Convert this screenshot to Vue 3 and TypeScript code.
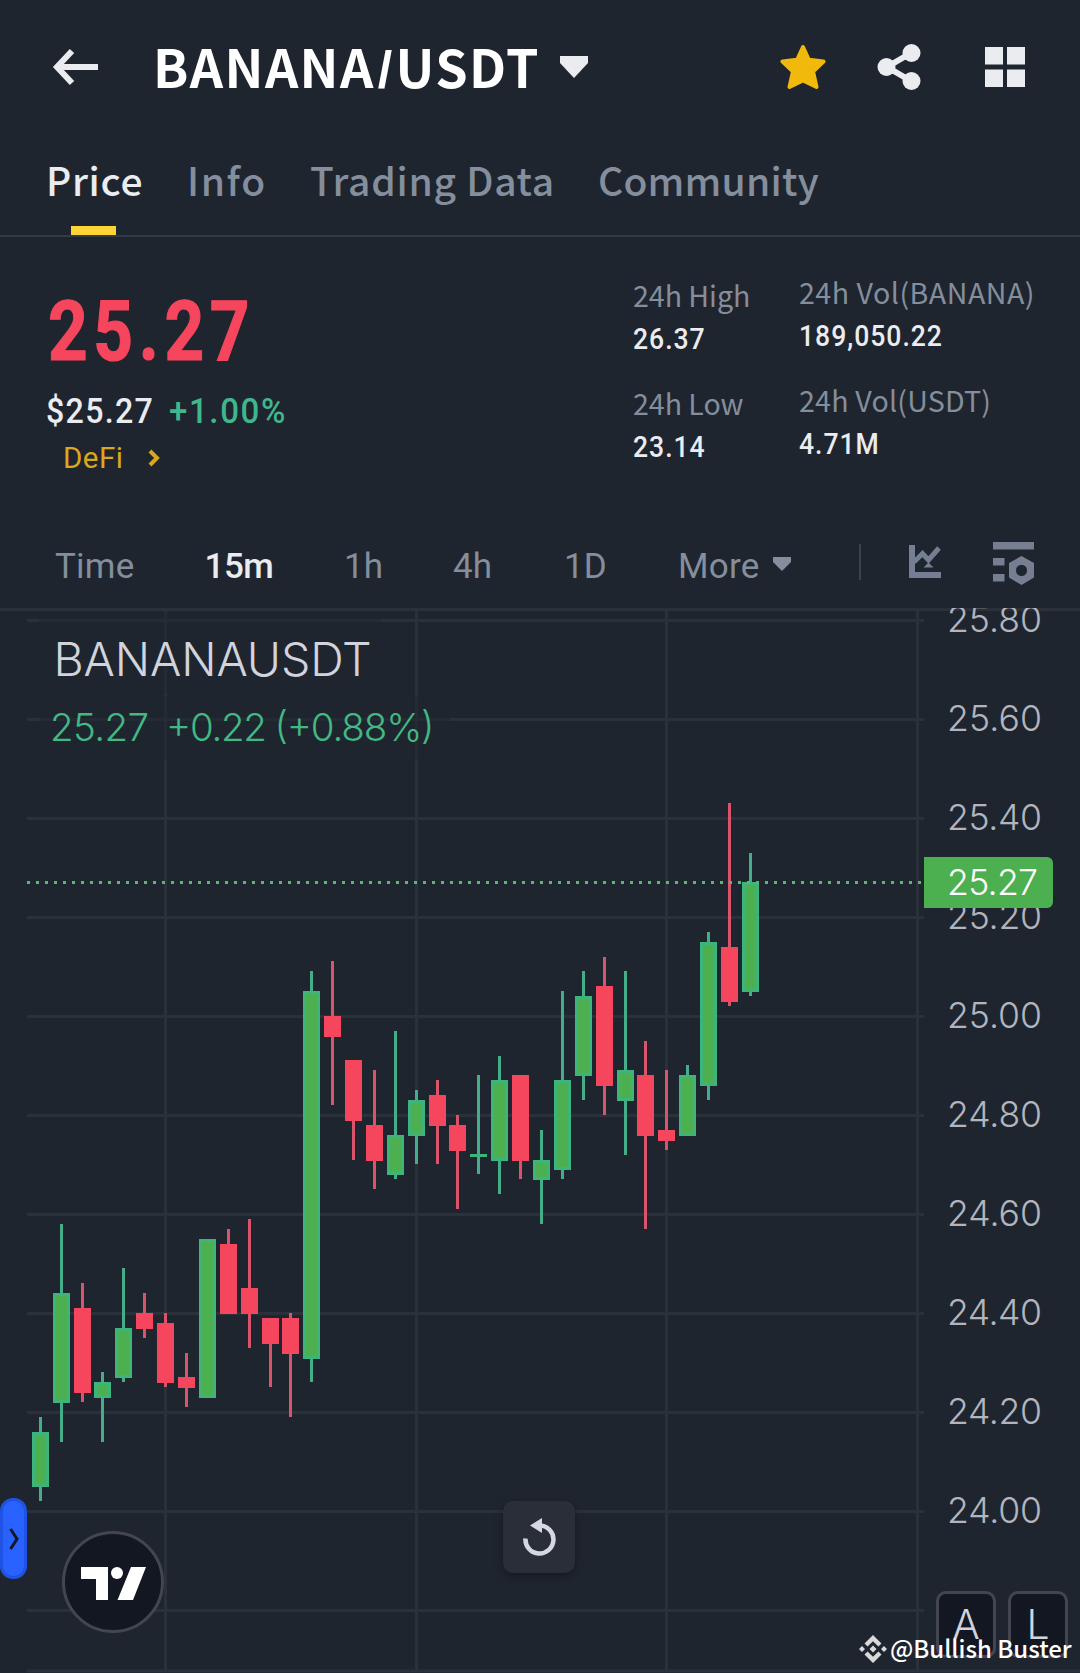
<script setup lang="ts">
interface Candle {
  x: number
  high: number
  top: number
  bottom: number
  low: number
  up: boolean
}

const tabs = ['Price', 'Info', 'Trading Data', 'Community']
const activeTab = 'Price'

const stats = [
  [
    { label: '24h High', value: '26.37' },
    { label: '24h Low', value: '23.14' },
  ],
  [
    { label: '24h Vol(BANANA)', value: '189,050.22' },
    { label: '24h Vol(USDT)', value: '4.71M' },
  ],
]

const intervals = ['Time', '15m', '1h', '4h', '1D']
const activeInterval = '15m'

// Chart coordinates: the plot's origin is CHART_TOP pixels down the screen.
const CHART_TOP = 608
const priceToY = (p: number): number => 1016.5 - (p - 25) * 495

const gridPrices = [25.8, 25.6, 25.4, 25.2, 25.0, 24.8, 24.6, 24.4, 24.2, 24.0, 23.8]
const axisPrices = gridPrices.slice(0, -1)
const gridColumns = [165.5, 416.5, 666.5, 917.5]
const lastPriceY = 882.5

const toCandle = (r: number[]): Candle => ({ x: r[0], high: r[1], top: r[2], bottom: r[3], low: r[4], up: r[5] === 1 })

// x centre, wick top, body top, body bottom, wick bottom, rising
const candles: Candle[] = [
  [40.5, 1417, 1432, 1487, 1501, 1],
  [61.5, 1224, 1293, 1403, 1442, 1],
  [82.5, 1283, 1308, 1393, 1402, 0],
  [102.5, 1372, 1382, 1398, 1442, 1],
  [123.5, 1268, 1328, 1378, 1382, 1],
  [144.5, 1293, 1313, 1329, 1338, 0],
  [165.5, 1313, 1323, 1383, 1387, 0],
  [186.5, 1353, 1377, 1388, 1407, 0],
  [207.5, 1239, 1239, 1398, 1398, 1],
  [228.5, 1229, 1244, 1314, 1314, 0],
  [249.5, 1219, 1288, 1314, 1348, 0],
  [270.5, 1318, 1318, 1344, 1387, 0],
  [290.5, 1313, 1318, 1354, 1417, 0],
  [311.5, 971, 991, 1359, 1382, 1],
  [332.5, 961, 1016, 1037, 1105, 0],
  [353.5, 1060, 1060, 1121, 1160, 0],
  [374.5, 1070, 1125, 1161, 1189, 0],
  [395.5, 1031, 1135, 1175, 1179, 1],
  [416.5, 1090, 1100, 1136, 1164, 1],
  [437.5, 1080, 1095, 1126, 1164, 0],
  [457.5, 1115, 1125, 1151, 1209, 0],
  [478.5, 1075, 1154, 1157, 1174, 1],
  [499.5, 1056, 1080, 1161, 1194, 1],
  [520.5, 1075, 1075, 1161, 1179, 0],
  [541.5, 1130, 1160, 1180, 1224, 1],
  [562.5, 991, 1080, 1170, 1179, 1],
  [583.5, 971, 996, 1076, 1100, 1],
  [604.5, 957, 986, 1086, 1115, 0],
  [625.5, 971, 1070, 1101, 1155, 1],
  [645.5, 1041, 1075, 1136, 1229, 0],
  [666.5, 1070, 1130, 1141, 1150, 0],
  [687.5, 1065, 1075, 1136, 1136, 1],
  [708.5, 932, 942, 1086, 1100, 1],
  [729.5, 803, 947, 1002, 1006, 0],
  [750.5, 853, 882, 992, 996, 1],
].map(toCandle)
</script>

<template>
  <main class="screen">
    <header class="header">
      <svg class="back" width="48" height="38" viewBox="0 0 48 38">
        <path d="M20 3 5 19l15 16M5 19h41" fill="none" stroke="#eaecef" stroke-width="6" />
      </svg>
      <h1>BANANA<span class="slash">/</span>USDT</h1>
      <svg class="caret" width="28" height="22" viewBox="0 0 28 22">
        <path d="M0 0h28v7L14 22 0 7z" fill="#eaecef" />
      </svg>
      <div class="actions">
        <svg width="46" height="46" viewBox="0 0 46 46">
          <path
            d="M23 3 28.8 15.8 43.5 17.5 33 27.5 36.5 43 23 36.5 9.500 43 13 27.500 2.500 17.500 17.200 15.800z"
            fill="#f0b90b"
            stroke="#f0b90b"
            stroke-width="4"
            stroke-linejoin="round"
          />
        </svg>
        <svg width="44" height="46" viewBox="0 0 44 46">
          <path d="M34 9 10 23l24 14" fill="none" stroke="#eaecef" stroke-width="6" />
          <g fill="#eaecef">
            <circle cx="34.500" cy="9" r="9" />
            <circle cx="9.500" cy="23" r="9" />
            <circle cx="34.500" cy="37" r="9" />
          </g>
        </svg>
        <svg width="40" height="40" viewBox="0 0 40 40" fill="#eaecef">
          <path d="M0 0h18v17.500H0zM22 0h18v17.500H22zM0 22.500h18V40H0zM22 22.500h18V40H22z" />
        </svg>
      </div>
    </header>

    <nav class="tabs">
      <a v-for="tab in tabs" :key="tab" :class="['tab', { active: tab === activeTab }]">
        <span>{{ tab }}</span>
      </a>
    </nav>

    <section class="quote">
      <div class="price-block">
        <div class="last">25.27</div>
        <div class="fiat"><span class="usd">$25.27</span><span class="change">+1.00%</span></div>
        <div class="tag">
          <span>DeFi</span>
          <svg width="12" height="18" viewBox="0 0 12 18">
            <path d="M2 2l7 7-7 7" fill="none" stroke="#d9a81c" stroke-width="4" />
          </svg>
        </div>
      </div>
      <div v-for="(column, i) in stats" :key="i" class="stat-column">
        <dl v-for="s in column" :key="s.label">
          <dt>{{ s.label }}</dt>
          <dd>{{ s.value }}</dd>
        </dl>
      </div>
    </section>

    <section class="intervals">
      <span v-for="item in intervals" :key="item" :class="['interval', { active: item === activeInterval }]">{{ item }}</span>
      <span class="interval more">
        More
        <svg width="18" height="14" viewBox="0 0 18 14"><path d="M0 0h18v5l-9 9-9-9z" fill="#848e9c" /></svg>
      </span>
      <i class="divider"></i>
      <svg class="indicator" width="32" height="33" viewBox="0 0 32 33">
        <path d="M0 0h6v27h26v6H0z" fill="#757f91" />
        <path d="M5 17l8.500-8.500 6 6.500L30 3" fill="none" stroke="#757f91" stroke-width="5" />
        <path d="M19.500 17.500l5 5h-10z" fill="#757f91" />
      </svg>
      <svg class="settings" width="41" height="43" viewBox="0 0 41 43" fill="#757f91">
        <path d="M0 0h41v7.500H0zM0 16h11.500v7.500H0zM0 32h11.500v7.500H0z" />
        <path fill-rule="evenodd" d="M28.500 14 41 21v14.500L28.500 43 16 35.500V21zM28.500 22.700a5.500 5.700 0 1 0 0 11.400 5.500 5.700 0 1 0 0-11.400z" />
      </svg>
    </section>

    <section class="chart">
      <svg class="plot" width="1080" height="1065" :viewBox="`0 ${CHART_TOP} 1080 1065`">
        <path d="M0 609.500H1080" class="grid" />
        <path v-for="p in gridPrices" :key="p" :d="`M27 ${priceToY(p)}H924`" class="grid" />
        <path v-for="x in gridColumns" :key="x" :d="`M${x} 609V1670`" class="grid" />
        <path d="M27 1671H1080" class="grid" />
        <rect x="39" y="612" width="342" height="82" class="legend-veil" />
        <rect x="39" y="696" width="411" height="64" class="legend-veil" />

        <g v-for="c in candles" :key="c.x" :class="c.up ? 'up' : 'down'">
          <rect class="wick" :x="c.x - 1.5" :y="c.high" width="3" :height="c.low - c.high" />
          <rect class="frame" :x="c.x - 8.5" :y="c.top" width="17" :height="c.bottom - c.top" />
          <rect
            v-if="c.bottom - c.top > 6"
            class="fill"
            :x="c.x - 5.5"
            :y="c.top + 3"
            width="11"
            :height="c.bottom - c.top - 6"
          />
        </g>
        <path :d="`M27 ${lastPriceY}H924`" class="last-line" />

        <g class="axis">
          <text v-for="p in axisPrices" :key="p" x="947" :y="priceToY(p) + 11.5" textLength="95">{{ p.toFixed(2) }}</text>
        </g>
        <path d="M924 857h123a6 6 0 0 1 6 6v39a6 6 0 0 1-6 6H924z" fill="#4caf50" />
        <text class="axis-last" x="947" y="895" textLength="91">25.27</text>

        <text class="symbol" x="53.500" y="676" textLength="318">BANANAUSDT</text>
        <g class="legend">
          <text x="50" y="741" textLength="99">25.27</text>
          <text x="166" y="741" textLength="101">+0.22</text>
          <text x="274.500" y="741" textLength="160">(+0.88%)</text>
        </g>
      </svg>

      <button class="drawer">
        <svg width="10" height="22" viewBox="0 0 10 22">
          <path d="M1.500 1 8 11 1.500 21" fill="none" stroke="#131722" stroke-width="3" />
        </svg>
      </button>

      <div class="tv">
        <svg width="66" height="33" viewBox="0 0 66 33" fill="#fff">
          <path d="M0 0h27v33H15V12H0zM50 0h15L52 33H36.500z" />
          <circle cx="36" cy="6" r="6" />
        </svg>
      </div>

      <button class="reset">
        <svg width="34" height="40" viewBox="0 0 34 40">
          <path d="M3.500 21.500A14 14 0 1 0 18 8.500" fill="none" stroke="#d5d8e0" stroke-width="4.500" />
          <path d="M8 8.500 20 1v15z" fill="#d5d8e0" />
        </svg>
      </button>

      <div class="scale-buttons"><button>A</button><button>L</button></div>

      <div class="watermark">
        <svg width="28" height="28" viewBox="0 0 28 28" fill="#d9d9d9">
          <path d="M14 0 22.500 8.500 19.400 11.600 14 6.200 8.600 11.600 5.500 8.500zM14 28 5.500 19.500 8.600 16.400 14 21.800 19.400 16.400 22.500 19.500zM3 11l3 3-3 3-3-3zM25 11l3 3-3 3-3-3zM14 10.500l3.500 3.500-3.500 3.500-3.500-3.500z" />
        </svg>
        <span>@Bullish Buster</span>
      </div>
    </section>
  </main>
</template>

<style>
body {
  background: #1f252f;
}
</style>

<style scoped>
.screen {
  width: 1080px;
  height: 1673px;
  overflow: hidden;
  background: #1f252f;
  color: #eaecef;
  font-family: 'Noto Sans CJK JP', 'Open Sans', sans-serif;
}
svg {
  display: block;
  flex: none;
}
button {
  padding: 0;
}

.header {
  display: flex;
  align-items: center;
  height: 134px;
  padding: 0 55px 0 52px;
  box-sizing: border-box;
}
h1 {
  width: 380px;
  margin: 0 27px 2px 53px;
  font-size: 52px;
  line-height: 76px;
  font-weight: 700;
  letter-spacing: 1.4px;
  color: #fff;
  white-space: nowrap;
}
.slash {
  padding: 0 2px 0 3px;
  font-family: 'Liberation Sans', sans-serif;
  line-height: 1;
}
.actions {
  display: flex;
  align-items: center;
  gap: 64.500px;
  margin-left: auto;
}
.actions svg:first-child {
  margin-right: -13.500px;
}

.tabs {
  display: grid;
  grid-template-columns: 141px 123px 288px auto;
  height: 101px;
  padding-left: 46px;
  border-bottom: 2px solid #333b47;
}
.tab {
  position: relative;
  font-size: 39px;
  line-height: 90px;
  font-weight: 500;
  letter-spacing: 0.7px;
  color: #848e9c;
  white-space: nowrap;
}
.tab:nth-child(2) {
  letter-spacing: 1.6px;
}
.tab:last-child {
  letter-spacing: 0.2px;
}
.tab.active {
  color: #eaecef;
}
.tab.active::after {
  content: '';
  position: absolute;
  left: 25px;
  bottom: 0;
  width: 45px;
  height: 9px;
  background: #fcd535;
}

.quote {
  display: flex;
  height: 278px;
  font-family: Roboto, sans-serif;
}
.price-block {
  width: 633px;
  padding-top: 45px;
  box-sizing: border-box;
}
.last {
  width: 260px;
  margin-left: 48px;
  font-size: 84px;
  line-height: 100px;
  font-weight: 700;
  letter-spacing: 6.8px;
  color: #f6465d;
  -webkit-text-stroke: 1.2px #f6465d;
  transform: scaleX(0.825);
  transform-origin: left;
}
.fiat {
  display: flex;
  height: 44px;
  margin-top: 8px;
  padding-left: 46px;
  font-size: 35px;
  line-height: 44px;
  font-weight: 500;
  letter-spacing: 1.4px;
}
.fiat span {
  width: 122px;
  transform: scaleX(0.92);
  transform-origin: left;
}
.fiat .change {
  letter-spacing: 1.7px;
  transform: translateX(1px) scaleX(0.945);
  color: #3fb68b;
}
.tag {
  display: flex;
  align-items: center;
  gap: 25px;
  margin-left: 63px;
  margin-top: -1px;
  font-size: 29.5px;
  line-height: 50px;
  letter-spacing: 0.5px;
  color: #d9a81c;
}
.tag svg {
  margin-top: -1px;
}
.stat-column {
  width: 166px;
  padding-top: 37px;
}
.stat-column + .stat-column {
  padding-top: 34px;
}
dl {
  height: 108px;
  margin: 0;
}
dt {
  height: 44px;
  font: 400 28.600px/42px 'Noto Sans CJK JP', sans-serif;
  letter-spacing: -0.05px;
  color: #848e9c;
  white-space: nowrap;
}
.stat-column + .stat-column dt {
  letter-spacing: 0.2px;
}
.stat-column + .stat-column dl:first-child dt {
  letter-spacing: 0.5px;
}
dd {
  width: 160px;
  margin: 0;
  font-size: 29.5px;
  line-height: 42px;
  font-weight: 500;
  letter-spacing: 1.100px;
  transform: scaleX(0.9);
  transform-origin: left;
}

.intervals {
  display: flex;
  align-items: center;
  height: 93px;
  padding-left: 55px;
  box-sizing: border-box;
  font-family: Roboto, sans-serif;
}
.interval {
  flex: none;
  width: 149.500px;
  font-size: 35px;
  line-height: 42px;
  margin-top: 10px;
  letter-spacing: 0.2px;
  color: #848e9c;
}
.interval:nth-child(2) {
  width: 139.500px;
}
.interval:nth-child(3) {
  width: 109px;
}
.interval:nth-child(4) {
  width: 111px;
}
.interval:nth-child(5) {
  width: 114px;
}
.interval.active {
  color: #eaecef;
  font-weight: 500;
  letter-spacing: -0.5px;
}
.interval.more {
  display: flex;
  gap: 14px;
  width: 181px;
}
.more svg {
  margin-top: 11px;
}
.divider {
  width: 2px;
  height: 36px;
  background: #3a424e;
}
.indicator {
  margin-left: 48px;
}
.settings {
  margin: 3px 0 0 52px;
}

.chart {
  position: relative;
  height: 1065px;
  font-family: Inter, sans-serif;
}
.grid {
  fill: none;
  stroke: #2a313b;
  stroke-width: 3;
}
.legend-veil {
  fill: #1f252f;
  opacity: 0.5;
}
.up .wick {
  fill: #45ae88;
}
.up .frame {
  fill: #3cb47c;
}
.up .fill {
  fill: #4caf50;
}
.down .wick {
  fill: #d9536a;
}
.down .frame,
.down .fill {
  fill: #f6465d;
}
.last-line {
  stroke: #5cb868;
  stroke-width: 3;
  stroke-dasharray: 3 6;
}
text {
  font-family: Inter, sans-serif;
  font-weight: 300;
}
.axis text,
.axis-last {
  font-size: 35.600px;
  fill: #b2b5be;
}
.axis-last {
  fill: #fff;
}
.symbol {
  font-size: 46.500px;
  fill: #d1d4dc;
}
.legend text {
  font-size: 38.500px;
  fill: #42b883;
}

.drawer {
  position: absolute;
  left: 0;
  top: 890px;
  display: flex;
  align-items: center;
  justify-content: center;
  width: 27px;
  height: 81px;
  border: 3px solid #1e53e5;
  border-radius: 13px;
  background: #2962ff;
}
.tv {
  position: absolute;
  left: 62px;
  top: 923px;
  display: flex;
  align-items: center;
  justify-content: center;
  width: 102px;
  height: 102px;
  box-sizing: border-box;
  border: 3px solid #434651;
  border-radius: 50%;
  background: #131722;
}
.tv svg {
  margin: 2px 0 0 1px;
}
.reset {
  position: absolute;
  left: 503px;
  top: 893px;
  display: flex;
  align-items: center;
  justify-content: center;
  width: 72px;
  height: 72px;
  border: 0;
  border-radius: 10px;
  background: #2a2e39;
  box-shadow: 0 3px 9px rgba(0, 0, 0, 0.35);
}
.scale-buttons {
  position: absolute;
  left: 936px;
  top: 983px;
  display: flex;
  gap: 12px;
}
.scale-buttons button {
  width: 60px;
  height: 67px;
  border: 3px solid #434651;
  border-radius: 10px;
  background: #131722;
  color: #d1d4dc;
  font: 300 41px/61px Inter, sans-serif;
}
.watermark {
  position: absolute;
  left: 859px;
  top: 1023px;
  display: flex;
  align-items: center;
  gap: 3px;
  height: 36px;
  color: #fff;
  font: 500 24px/36px 'Noto Sans CJK JP', sans-serif;
  white-space: nowrap;
}
.watermark span {
  margin-top: -2px;
}
</style>
